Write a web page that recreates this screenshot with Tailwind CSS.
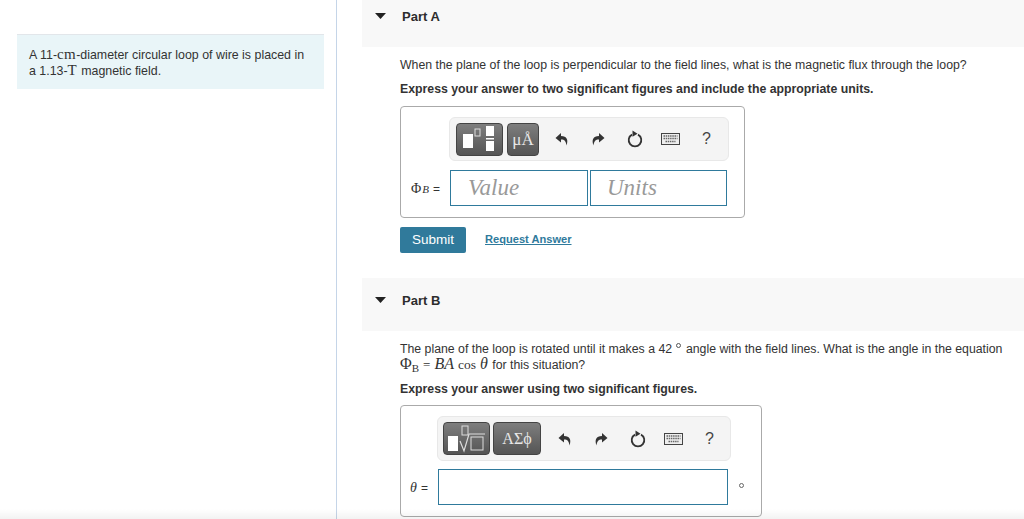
<!DOCTYPE html>
<html lang="en">
<head>
  <meta charset="UTF-8"/>
  <title>Part A / Part B</title>
  <script src="https://cdn.jsdelivr.net/npm/@tailwindcss/browser@4"></script>
</head>
<body class="relative bg-white h-[519px] w-[1024px] overflow-hidden font-['Liberation_Sans',sans-serif] text-[#333] text-[12.3px]">
<div class="flex h-[519px]">
  <!-- left column -->
  <div class="w-[337px] shrink-0 border-r border-[#c5d5e8] pl-[17px] pr-[12px] pt-[34px]">
    <div class="h-[55px] bg-[#e9f5f8] border-t border-[#e2e6ea] pl-[12px] pt-[12px] leading-[15px] text-[12.4px]">
      A 11-<span class="font-['Liberation_Serif',serif] text-[15px] tracking-[0.4px]">cm</span>-diameter circular loop of wire is placed in<br/>a 1.13-<span class="font-['Liberation_Serif',serif] text-[15px] mr-[1px]">T</span> magnetic field.
    </div>
  </div>

  <!-- right column -->
  <div class="ml-[25px] flex-1">
    <!-- Part A -->
    <div class="h-[47px] bg-[#f8f8f8] flex items-start pt-[9px] pl-[13px] font-bold text-[13px] text-[#2d2d2d]">
      <svg class="w-[11px] h-[6px] mt-[4px]" viewBox="0 0 11 6"><path d="M0 0H11L5.5 6Z" fill="#222"/></svg>
      <span class="ml-[16px] leading-[15px]">Part A</span>
    </div>
    <div class="pl-[38px]">
      <p class="mt-[11px] leading-[15px] whitespace-nowrap">When the plane of the loop is perpendicular to the field lines, what is the magnetic flux through the loop?</p>
      <p class="mt-[9px] leading-[15px] font-bold">Express your answer to two significant figures and include the appropriate units.</p>

      <div class="mt-[9px] w-[345px] h-[112px] border border-[#aaa] rounded-[4px] pt-[10px]">
        <div class="ml-[48px] w-[280px] h-[44px] bg-[#f4f4f4] border border-[#e8e8e8] rounded-[6px] flex items-center pl-[6px]">
          <div class="w-[47px] h-[33px] rounded-[4px] border border-[#444] bg-gradient-to-b from-[#7e7e7e] to-[#555] flex items-center justify-center">
            <svg width="36" height="26" viewBox="0 0 36 26" fill="#fff">
              <rect x="1" y="8" width="10" height="14"/>
              <rect x="13" y="3" width="5" height="7" fill="none" stroke="#ddd"/>
              <rect x="24" y="0" width="8" height="10"/><rect x="24" y="12" width="8" height="1.5"/><rect x="24" y="15" width="8" height="10"/>
            </svg>
          </div>
          <div class="ml-[4px] w-[32px] h-[33px] rounded-[4px] border border-[#444] bg-gradient-to-b from-[#7e7e7e] to-[#555] flex items-center justify-center text-white/85 font-['Liberation_Serif',serif] text-[17px] pt-[2px]">μÅ</div>
          <svg class="ml-[16px]" width="14" height="14" viewBox="0 0 14 14"><path d="M6 1 L0.5 6 L6 10.5 V7.5 C9 7.3 11 8.8 11.5 13.5 C13.5 8 12 4.2 6 4.1Z" fill="#333"/></svg>
          <svg class="ml-[22px]" width="14" height="14" viewBox="0 0 14 14"><path d="M8 1 L13.5 6 L8 10.5 V7.5 C5 7.3 3 8.8 2.5 13.5 C0.5 8 2 4.2 8 4.1Z" fill="#333"/></svg>
          <svg class="ml-[22px]" width="16" height="18" viewBox="0 0 16 18"><path d="M5 4.6 A6.3 6.3 0 1 0 11 4.6" fill="none" stroke="#333" stroke-width="1.8"/><path d="M5.5 0.5 L10.5 3.7 L5.5 6.8Z" fill="#333"/></svg>
          <svg class="ml-[18px]" width="19" height="12" viewBox="0 0 19 12"><rect x="0.5" y="0.5" width="18" height="11" fill="#eee" stroke="#444"/><path d="M2.5 3H16.5M2.5 5.5H16.5M4.5 8.5H14.5" stroke="#666" stroke-width="1.4" stroke-dasharray="1.5 .7"/></svg>
          <span class="ml-[22px] text-[16px] text-[#444]">?</span>
        </div>
        <div class="flex items-center mt-[9px]">
          <span class="w-[49px] pl-[10px] font-['Liberation_Serif',serif] text-[14px] whitespace-nowrap">Φ<i class="text-[11px] ml-[1px]">B</i><span class="ml-[4px] font-['Liberation_Sans',sans-serif] text-[12px]">=</span></span>
          <div class="w-[138px] h-[36px] border border-[#2f7a9c] pl-[17px] flex items-center font-['Liberation_Serif',serif] italic text-[23px] text-[#999]">Value</div>
          <div class="ml-[2px] w-[137px] h-[36px] border border-[#2f7a9c] pl-[16px] flex items-center font-['Liberation_Serif',serif] italic text-[23px] text-[#999]">Units</div>
        </div>
      </div>

      <div class="flex items-center mt-[9px]">
        <div class="w-[66px] h-[26px] bg-[#307a9b] rounded-[2px] text-white text-[13.5px] pt-[1px] flex items-center justify-center">Submit</div>
        <a class="ml-[19px] mb-[2px] text-[#2f7a9c] font-bold text-[11.1px] underline">Request Answer</a>
      </div>
    </div>

    <!-- Part B -->
    <div class="mt-[25px] h-[53px] bg-[#f8f8f8] flex items-start pt-[15px] pl-[13px] font-bold text-[13px] text-[#2d2d2d]">
      <svg class="w-[11px] h-[6px] mt-[4px]" viewBox="0 0 11 6"><path d="M0 0H11L5.5 6Z" fill="#222"/></svg>
      <span class="ml-[16px] leading-[15px]">Part B</span>
    </div>
    <div class="pl-[38px]">
      <div class="mt-[11px] h-[30px] leading-[15px] whitespace-nowrap">
        <p>The plane of the loop is rotated until it makes a 42 <span class="inline-block align-top mt-[1px] w-[5px] h-[5px] mx-[1px] rounded-full border border-[#555]"></span> angle with the field lines. What is the angle in the equation</p>
        <p class="h-[15px] -mt-[1px]"><span class="font-['Liberation_Serif',serif] text-[16px] leading-none">Φ<sub class="text-[11px]">B</sub><span class="ml-[4px] text-[13px]">=</span> <i>BA</i> <span class="text-[13.5px]">cos</span> <i>θ</i></span><span class="ml-[1px]"> for this situation?</span></p>
      </div>
      <p class="mt-[10px] leading-[15px] font-bold">Express your answer using two significant figures.</p>

      <div class="mt-[8px] w-[362px] h-[112px] border border-[#aaa] rounded-[4px] pt-[10px]">
        <div class="ml-[36px] w-[294px] h-[45px] bg-[#f4f4f4] border border-[#e8e8e8] rounded-[6px] flex items-center pl-[5px]">
          <div class="w-[47px] h-[33px] rounded-[4px] border border-[#444] bg-gradient-to-b from-[#7e7e7e] to-[#555] flex items-center justify-center">
            <svg width="39" height="28" viewBox="0 0 39 28" fill="none">
              <rect x="1" y="11" width="10" height="15" fill="#fff"/>
              <rect x="15" y="1" width="6" height="9" stroke="#ddd"/>
              <path d="M13 16 L17 26 L22 9 H38" stroke="#ddd" stroke-width="1.2"/>
              <rect x="24" y="12" width="12" height="13" stroke="#ddd"/>
            </svg>
          </div>
          <div class="ml-[3px] w-[48px] h-[33px] rounded-[4px] border border-[#444] bg-gradient-to-b from-[#7e7e7e] to-[#555] flex items-center justify-center text-white/85 font-['Liberation_Serif',serif] text-[16px]">ΑΣϕ</div>
          <svg class="ml-[17px]" width="14" height="14" viewBox="0 0 14 14"><path d="M6 1 L0.5 6 L6 10.5 V7.5 C9 7.3 11 8.8 11.5 13.5 C13.5 8 12 4.2 6 4.1Z" fill="#333"/></svg>
          <svg class="ml-[22px]" width="14" height="14" viewBox="0 0 14 14"><path d="M8 1 L13.5 6 L8 10.5 V7.5 C5 7.3 3 8.8 2.5 13.5 C0.5 8 2 4.2 8 4.1Z" fill="#333"/></svg>
          <svg class="ml-[22px]" width="16" height="18" viewBox="0 0 16 18"><path d="M5 4.6 A6.3 6.3 0 1 0 11 4.6" fill="none" stroke="#333" stroke-width="1.8"/><path d="M5.5 0.5 L10.5 3.7 L5.5 6.8Z" fill="#333"/></svg>
          <svg class="ml-[18px]" width="19" height="12" viewBox="0 0 19 12"><rect x="0.5" y="0.5" width="18" height="11" fill="#eee" stroke="#444"/><path d="M2.5 3H16.5M2.5 5.5H16.5M4.5 8.5H14.5" stroke="#666" stroke-width="1.4" stroke-dasharray="1.5 .7"/></svg>
          <span class="ml-[22px] text-[16px] text-[#444]">?</span>
        </div>
        <div class="flex items-center mt-[8px]">
          <span class="w-[37px] pl-[9px] font-['Liberation_Serif',serif] text-[14px] whitespace-nowrap"><i>θ</i><span class="ml-[4px] font-['Liberation_Sans',sans-serif] text-[12px]">=</span></span>
          <div class="w-[290px] h-[36px] border border-[#2f7a9c]"></div>
          <span class="ml-[11px] mb-[3px] w-[5px] h-[5px] rounded-full border border-[#666]"></span>
        </div>
      </div>
    </div>
  </div>
</div>
<!-- faint shade along the bottom edge -->
<div class="absolute left-0 right-0 bottom-0 h-[10px] bg-gradient-to-t from-black/5 to-transparent"></div>
</body>
</html>
